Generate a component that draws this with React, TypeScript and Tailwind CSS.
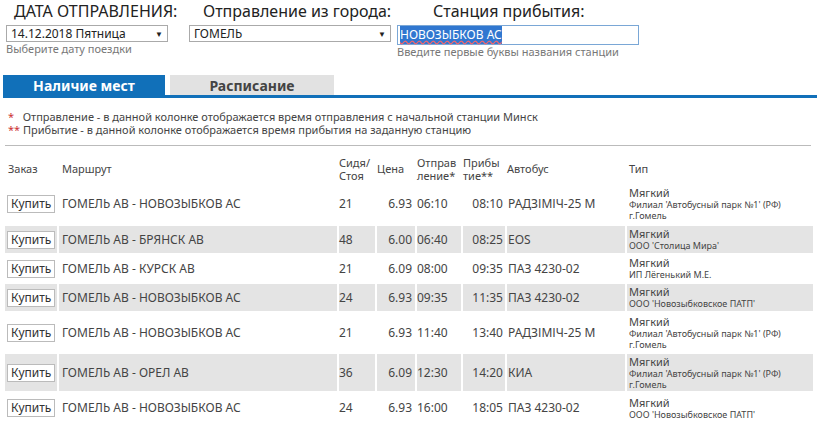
const rows = [
  { route: 'ГОМЕЛЬ АВ - НОВОЗЫБКОВ АС', seats: '21', price: '6.93', dep: '06:10', arr: '08:10', bus: 'РАДЗІМІЧ-25 М', org: "Филиал 'Автобусный парк №1' (РФ) г.Гомель", h: 'h-[40px]' },
  { route: 'ГОМЕЛЬ АВ - БРЯНСК АВ', seats: '48', price: '6.00', dep: '06:40', arr: '08:25', bus: 'EOS', org: "ООО 'Столица Мира'", h: 'h-[27px]' },
  { route: 'ГОМЕЛЬ АВ - КУРСК АВ', seats: '21', price: '6.09', dep: '08:00', arr: '09:35', bus: 'ПАЗ 4230-02', org: 'ИП Лёгенький М.Е.', h: 'h-[27px]' },
  { route: 'ГОМЕЛЬ АВ - НОВОЗЫБКОВ АС', seats: '24', price: '6.93', dep: '09:35', arr: '11:35', bus: 'ПАЗ 4230-02', org: "ООО 'Новозыбковское ПАТП'", h: 'h-[27px]' },
  { route: 'ГОМЕЛЬ АВ - НОВОЗЫБКОВ АС', seats: '21', price: '6.93', dep: '11:40', arr: '13:40', bus: 'РАДЗІМІЧ-25 М', org: "Филиал 'Автобусный парк №1' (РФ) г.Гомель", h: 'h-[39px]' },
  { route: 'ГОМЕЛЬ АВ - ОРЕЛ АВ', seats: '36', price: '6.09', dep: '12:30', arr: '14:20', bus: 'КИА', org: "Филиал 'Автобусный парк №1' (РФ) г.Гомель", h: 'h-[37px]' },
  { route: 'ГОМЕЛЬ АВ - НОВОЗЫБКОВ АС', seats: '24', price: '6.93', dep: '16:00', arr: '18:05', bus: 'ПАЗ 4230-02', org: "ООО 'Новозыбковское ПАТП'", h: 'h-[30px]' },
];

export default function App() {
  return (
    <div className="w-[820px] h-[439px] overflow-hidden bg-white text-[#333] font-['Liberation_Sans']">
      <div className="flex pl-[6px] pt-[1px]">
        <div className="w-[176px]">
          <div className="text-[16px] leading-[20px] text-[#222] pl-[8px]">ДАТА ОТПРАВЛЕНИЯ:</div>
          <div className="mt-[4px] h-[17px] w-[162px] border border-[#aaa] flex items-center justify-between px-[4px] text-[12px] text-[#222]">
            <span>14.12.2018 Пятница</span><span className="text-[8px]">▼</span>
          </div>
          <div className="text-[11px] text-[#777] leading-[14px]">Выберите дату поездки</div>
        </div>
        <div className="w-[208px] ml-[7px]">
          <div className="text-[16px] leading-[20px] text-[#222] pl-[14px]">Отправление из города:</div>
          <div className="mt-[4px] h-[17px] w-[202px] border border-[#aaa] flex items-center justify-between px-[4px] text-[12px] text-[#222]">
            <span>ГОМЕЛЬ</span><span className="text-[8px]">▼</span>
          </div>
        </div>
        <div>
          <div className="text-[16px] leading-[20px] text-[#222] pl-[36px]">Станция прибытия:</div>
          <div className="mt-[4px] h-[20px] w-[242px] border border-[#7aa7d6] flex items-center px-[2px] text-[12px]">
            <span className="bg-[#3077d0] text-white underline decoration-wavy decoration-red-400">НОВОЗЫБКОВ АС</span>
          </div>
          <div className="text-[11px] text-[#777] leading-[14px]">Введите первые буквы названия станции</div>
        </div>
      </div>

      <div className="mt-[16px] mx-[3px] flex gap-[5px] border-b-[3px] border-[#1170b9]">
        <div className="w-[162px] h-[20px] bg-[#1170b9] text-white font-bold text-[14px] flex items-center justify-center">Наличие мест</div>
        <div className="w-[164px] h-[20px] bg-[#e2e2e2] text-[#444] font-bold text-[14px] flex items-center justify-center">Расписание</div>
      </div>

      <div className="mt-[12px] pl-[8px] text-[11px] leading-[13px] text-[#444]">
        <div><span className="text-[#c33]">*</span>&nbsp;&nbsp; Отправление - в данной колонке отображается время отправления с начальной станции Минск</div>
        <div><span className="text-[#c33]">**</span> Прибытие - в данной колонке отображается время прибытия на заданную станцию</div>
      </div>
      <div className="mt-[9px] mx-[5px] w-[806px] border-t border-[#bbb]" />

      <table className="mt-[8px] ml-[3px] table-fixed w-[812px] border-separate border-spacing-[2px] text-[12px] text-[#444]">
        <colgroup>
          <col className="w-[52px]" />
          <col className="w-[278px]" />
          <col className="w-[36px]" />
          <col className="w-[38px]" />
          <col className="w-[44px]" />
          <col className="w-[42px]" />
          <col className="w-[118px]" />
          <col />
        </colgroup>
        <thead>
          <tr className="h-[26px] text-left text-[11px]">
            <th className="font-normal pl-[3px]">Заказ</th>
            <th className="font-normal pl-[3px]">Маршрут</th>
            <th className="font-normal leading-[13px]">Сидя/<br />Стоя</th>
            <th className="font-normal">Цена</th>
            <th className="font-normal leading-[13px]">Отправ<br />ление*</th>
            <th className="font-normal leading-[13px]">Прибы<br />тие**</th>
            <th className="font-normal">Автобус</th>
            <th className="font-normal pl-[2px]">Тип</th>
          </tr>
        </thead>
        <tbody>
          {rows.map((r, i) => {
            const bg = i % 2 === 1 ? 'bg-[#e4e4e4]' : '';
            return (
              <tr key={i} className={r.h}>
                <td className={`${bg} pl-[2px]`}>
                  <button className="border border-[#bbb] bg-white px-[3px] h-[18px] text-[12px] leading-[16px] text-[#333]">Купить</button>
                </td>
                <td className={`${bg} pl-[3px]`}>{r.route}</td>
                <td className={bg}>{r.seats}</td>
                <td className={`${bg} text-right pr-[3px]`}>{r.price}</td>
                <td className={bg}>{r.dep}</td>
                <td className={`${bg} text-right pr-[2px]`}>{r.arr}</td>
                <td className={`${bg} pl-[1px]`}>{r.bus}</td>
                <td className={`${bg} pl-[2px] leading-[12px]`}>
                  <div className="text-[11px]">Мягкий</div>
                  <div className="text-[9px] leading-[11px] w-[170px]">{r.org}</div>
                </td>
              </tr>
            );
          })}
        </tbody>
      </table>
    </div>
  );
}
